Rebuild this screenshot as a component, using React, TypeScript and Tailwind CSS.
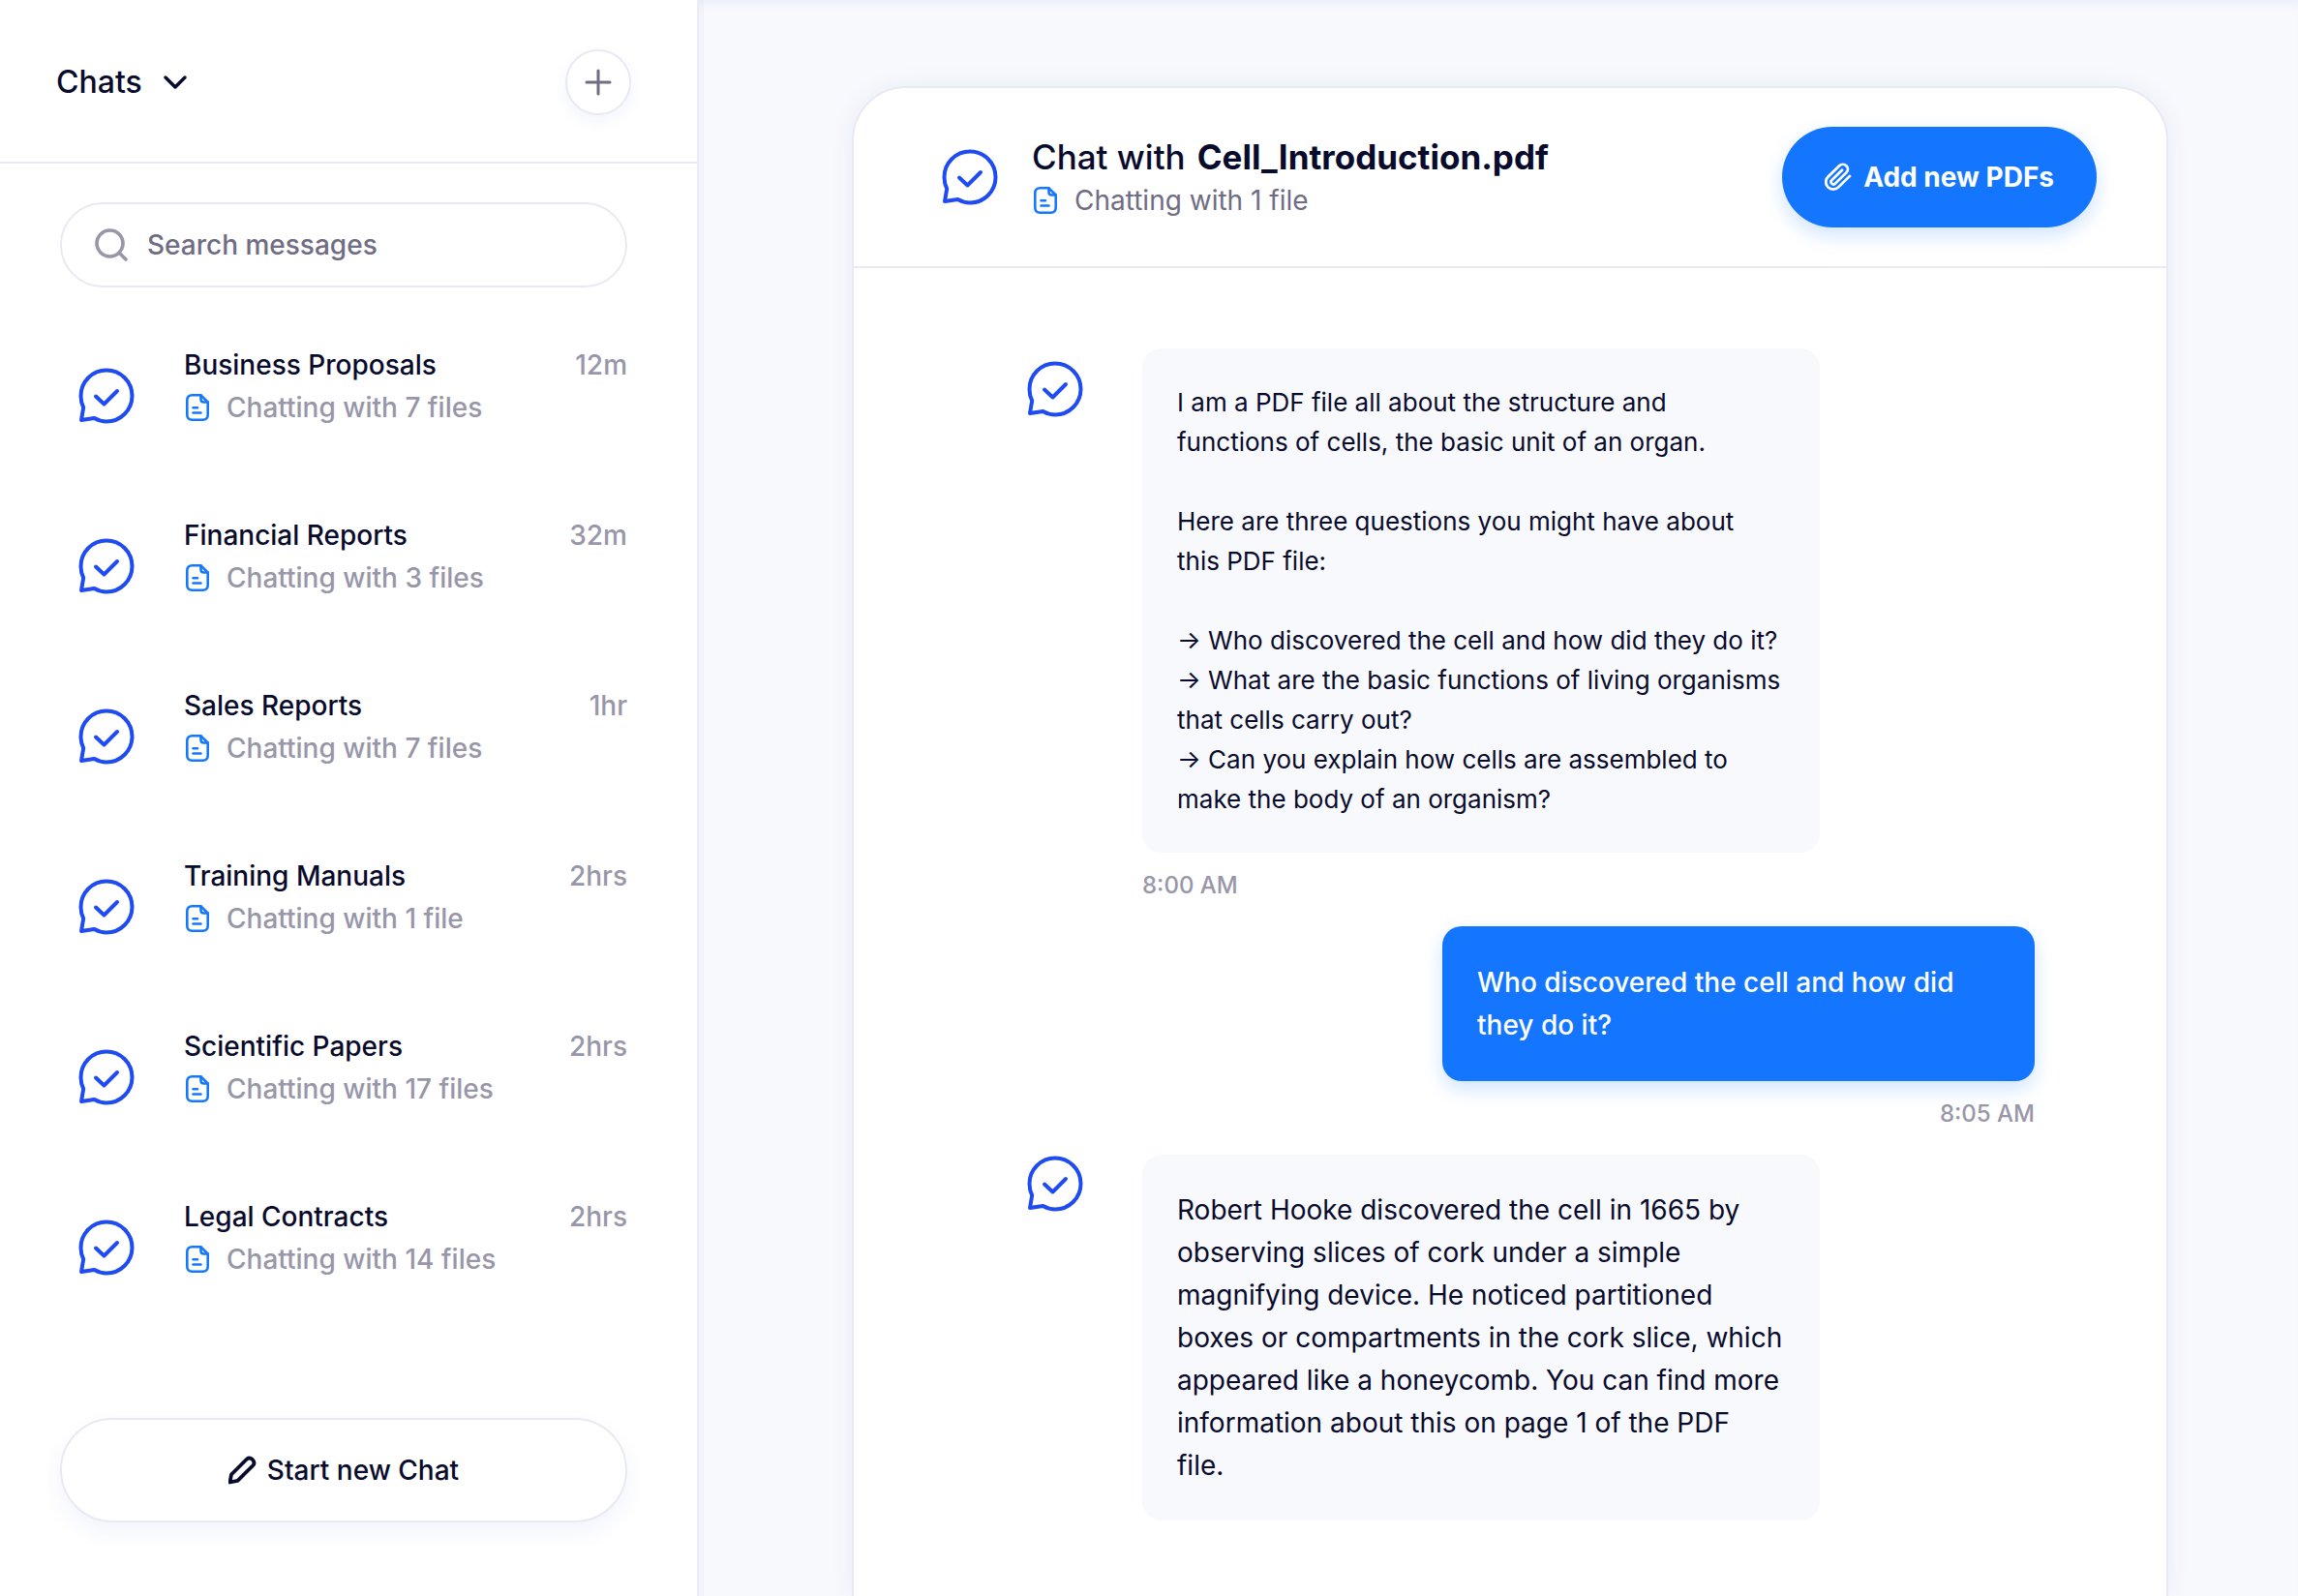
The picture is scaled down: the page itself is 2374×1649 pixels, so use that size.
import React from 'react';

const chats = [
  { title: 'Business Proposals', files: 'Chatting with 7 files', time: '12m' },
  { title: 'Financial Reports', files: 'Chatting with 3 files', time: '32m' },
  { title: 'Sales Reports', files: 'Chatting with 7 files', time: '1hr' },
  { title: 'Training Manuals', files: 'Chatting with 1 file', time: '2hrs' },
  { title: 'Scientific Papers', files: 'Chatting with 17 files', time: '2hrs' },
  { title: 'Legal Contracts', files: 'Chatting with 14 files', time: '2hrs' },
];

const ChatIcon: React.FC = () => (
  <svg className="h-[60px] w-[60px] shrink-0" viewBox="0 0 60 60" fill="none" stroke="#1f4bf2" strokeWidth="4" strokeLinecap="round" strokeLinejoin="round">
    <path d="M3.5 30A26.5 26.5 0 1 1 30 56.5C25.2 56.5 21.5 55.3 17.5 53L4 55L6.200 42C4.400 38.500 3.500 34.300 3.500 30Z" />
    <path d="M19 30.5L27.500 38.500L41 25" />
  </svg>
);

const FileIcon: React.FC = () => (
  <svg className="h-7 w-7 shrink-0" viewBox="-2 0 28 28" fill="none" stroke="#1677ff" strokeWidth="2.6" strokeLinecap="round" strokeLinejoin="round">
    <path d="M15.500 1.300H6.500Q1.300 1.300 1.300 6.500V21.500Q1.300 26.700 6.500 26.700H17.500Q22.700 26.700 22.700 21.500V8.500Z" />
    <path d="M15.500 1.300V5.500Q15.500 8.500 18.500 8.500H22.700" />
    <path d="M7.500 14.300H12M7.500 19.500H15.500" />
  </svg>
);

const Sidebar: React.FC = () => {
  return (
    <aside className="flex w-[722px] shrink-0 flex-col border-r-2 border-[#ebebf3] bg-white shadow-[5px_0_0_#f2f4fb]">
      <div className="flex h-[169px] items-center justify-between border-b-2 border-[#e9e9f1] pt-0.5 pr-[68px] pl-[58px]">
        <button type="button" className="flex items-center gap-5 text-[32px] leading-10 font-medium">
          Chats
          <svg className="h-4 w-7" viewBox="0 0 28 16" fill="none" stroke="#090b2c" strokeWidth="3.5" strokeLinecap="round" strokeLinejoin="round">
            <path d="M4 3L14 13L24 3" />
          </svg>
        </button>
        <button type="button" aria-label="New chat" className="flex h-[68px] w-[68px] items-center justify-center rounded-full border-2 border-[#e9e9f3] bg-white shadow-[0_6px_16px_rgba(30,70,200,0.06)]">
          <svg className="h-7 w-7" viewBox="0 0 28 28" fill="none" stroke="#6f6c84" strokeWidth="3" strokeLinecap="round">
            <path d="M14 2V26M2 14H26" />
          </svg>
        </button>
      </div>
      <div className="flex flex-col pt-10 pr-[72px] pl-[62px]">
        <label className="flex h-[88px] items-center gap-5 rounded-full border-2 border-[#e9e9f3] px-[34px]">
          <svg className="h-[34px] w-[34px] shrink-0" viewBox="0 0 34 34" fill="none" stroke="#9896a9" strokeWidth="3.600" strokeLinecap="round">
            <circle cx="15.500" cy="15.500" r="13.500" />
            <path d="M25.500 25.500L32 32" />
          </svg>
          <input type="text" aria-label="Search messages" placeholder="Search messages" className="min-w-0 flex-1 bg-transparent text-[28px] leading-10 font-medium outline-none placeholder:text-[#6f6c84]" />
        </label>
        <ul className="mt-[58px] flex flex-col gap-[88px]">
          {chats.map((chat) => (
            <li key={chat.title} className="flex pl-[18px] text-[28px] leading-[44px] font-medium">
              <div className="pt-6">
                <ChatIcon />
              </div>
              <div className="ml-[50px] h-[88px] flex-1">
                <div className="flex justify-between">
                  <h2>{chat.title}</h2>
                  <span className="text-[#9896a9]">{chat.time}</span>
                </div>
                <p className="flex items-center gap-4 text-[#9896a9]">
                  <FileIcon />
                  {chat.files}
                </p>
              </div>
            </li>
          ))}
        </ul>
        <button type="button" className="mt-[142px] mb-[76px] flex h-[108px] items-center justify-center gap-2 rounded-full border-2 border-[#e9e9f3] bg-white text-[28px] leading-10 font-medium shadow-[0_10px_24px_rgba(30,70,200,0.06)]">
          <svg className="h-8 w-8" viewBox="2 0 32 32" fill="none" stroke="#090b2c" strokeWidth="3.800" strokeLinejoin="round">
            <path d="M3.500 28.500L5 20.500L20.500 5Q23.500 2 27 5.200Q30 8.500 27 11.500L11.500 26.800Z" />
          </svg>
          Start new Chat
        </button>
      </div>
    </aside>
  );
};

const App: React.FC = () => {
  return (
    <div className="flex min-h-screen bg-[#f8f9fd] font-['Inter',sans-serif] text-[#090b2c]">
      <Sidebar />
      <main className="flex min-w-0 flex-1 flex-col pt-[89px] pr-[134px] pl-[158px] shadow-[inset_0_10px_10px_-6px_rgba(30,70,200,0.06)]">
        <section className="flex-1 rounded-t-[56px] border-2 border-b-0 border-[#e9e9f1] bg-white shadow-[0_0_24px_rgba(30,70,200,0.07)]">
          <header className="flex h-[186px] items-center border-b-2 border-[#e9e9f1] pr-[72px] pl-[90px]">
            <ChatIcon />
            <div className="ml-[34px] flex-1 pt-0.5">
              <h1 className="flex items-baseline gap-3 text-[35px] leading-[46px] font-medium">
                Chat with <span className="font-bold">Cell_Introduction.pdf</span>
              </h1>
              <p className="flex items-center gap-4 text-[28px] leading-[44px] text-[#6f6c84]">
                <FileIcon />
                Chatting with 1 file
              </p>
            </div>
            <button type="button" className="flex h-[104px] items-center gap-3 rounded-full bg-[#1476ff] px-11 text-[28px] leading-10 font-bold text-white shadow-[0_8px_20px_rgba(22,119,255,0.2)]">
              <svg className="h-[30px] w-7" viewBox="1 0 22 24" preserveAspectRatio="none" fill="none" stroke="currentColor" strokeWidth="2.200" strokeLinecap="round" strokeLinejoin="round">
                <path d="M21.400 11.100l-9.200 9.200a6 6 0 0 1-8.500-8.500l9.200-9.200a4 4 0 0 1 5.700 5.700l-9.200 9.200a2 2 0 0 1-2.800-2.800l8.500-8.500" />
              </svg>
              Add new PDFs
            </button>
          </header>
          <div className="flex flex-col pt-[83px] pr-[136px] pb-[77px] pl-[178px]">
            <div className="flex items-start gap-[60px]">
              <div className="pt-3">
                <ChatIcon />
              </div>
              <div className="w-[700px]">
                <p className="rounded-[20px] bg-[#f8f9fd] py-[35px] pr-10 pl-9 text-[26px] leading-[41px] whitespace-pre-line">
                  I am a PDF file all about the structure and functions of cells, the basic unit of an organ.{'\n\n'}
                  Here are three questions you might have about this PDF file:{'\n\n'}
                  → Who discovered the cell and how did they do it?{'\n'}
                  → What are the basic functions of living organisms that cells carry out?{'\n'}
                  → Can you explain how cells are assembled to make the body of an organism?
                </p>
                <time className="mt-4 block text-[24px] leading-9 font-medium text-[#9896a9]">8:00 AM</time>
              </div>
            </div>
            <div className="mt-6 flex w-[612px] flex-col self-end">
              <p className="rounded-[20px] bg-[#1476ff] p-9 text-[28px] leading-[44px] font-medium text-white shadow-[0_8px_20px_rgba(22,119,255,0.2)]">
                Who discovered the cell and how did they do it?
              </p>
              <time className="mt-4 text-right text-[24px] leading-9 font-medium text-[#9896a9]">8:05 AM</time>
            </div>
            <div className="mt-6 flex items-start gap-[60px]">
              <ChatIcon />
              <p className="w-[700px] rounded-[20px] bg-[#f8f9fd] py-[35px] pr-[38px] pl-9 text-[28px] leading-[44px]">
                Robert Hooke discovered the cell in 1665 by observing slices of cork under a simple magnifying device. He noticed partitioned boxes or compartments in the cork slice, which appeared like a honeycomb. You can find more information about this on page 1 of the PDF file.
              </p>
            </div>
          </div>
        </section>
      </main>
    </div>
  );
};

export default App;
